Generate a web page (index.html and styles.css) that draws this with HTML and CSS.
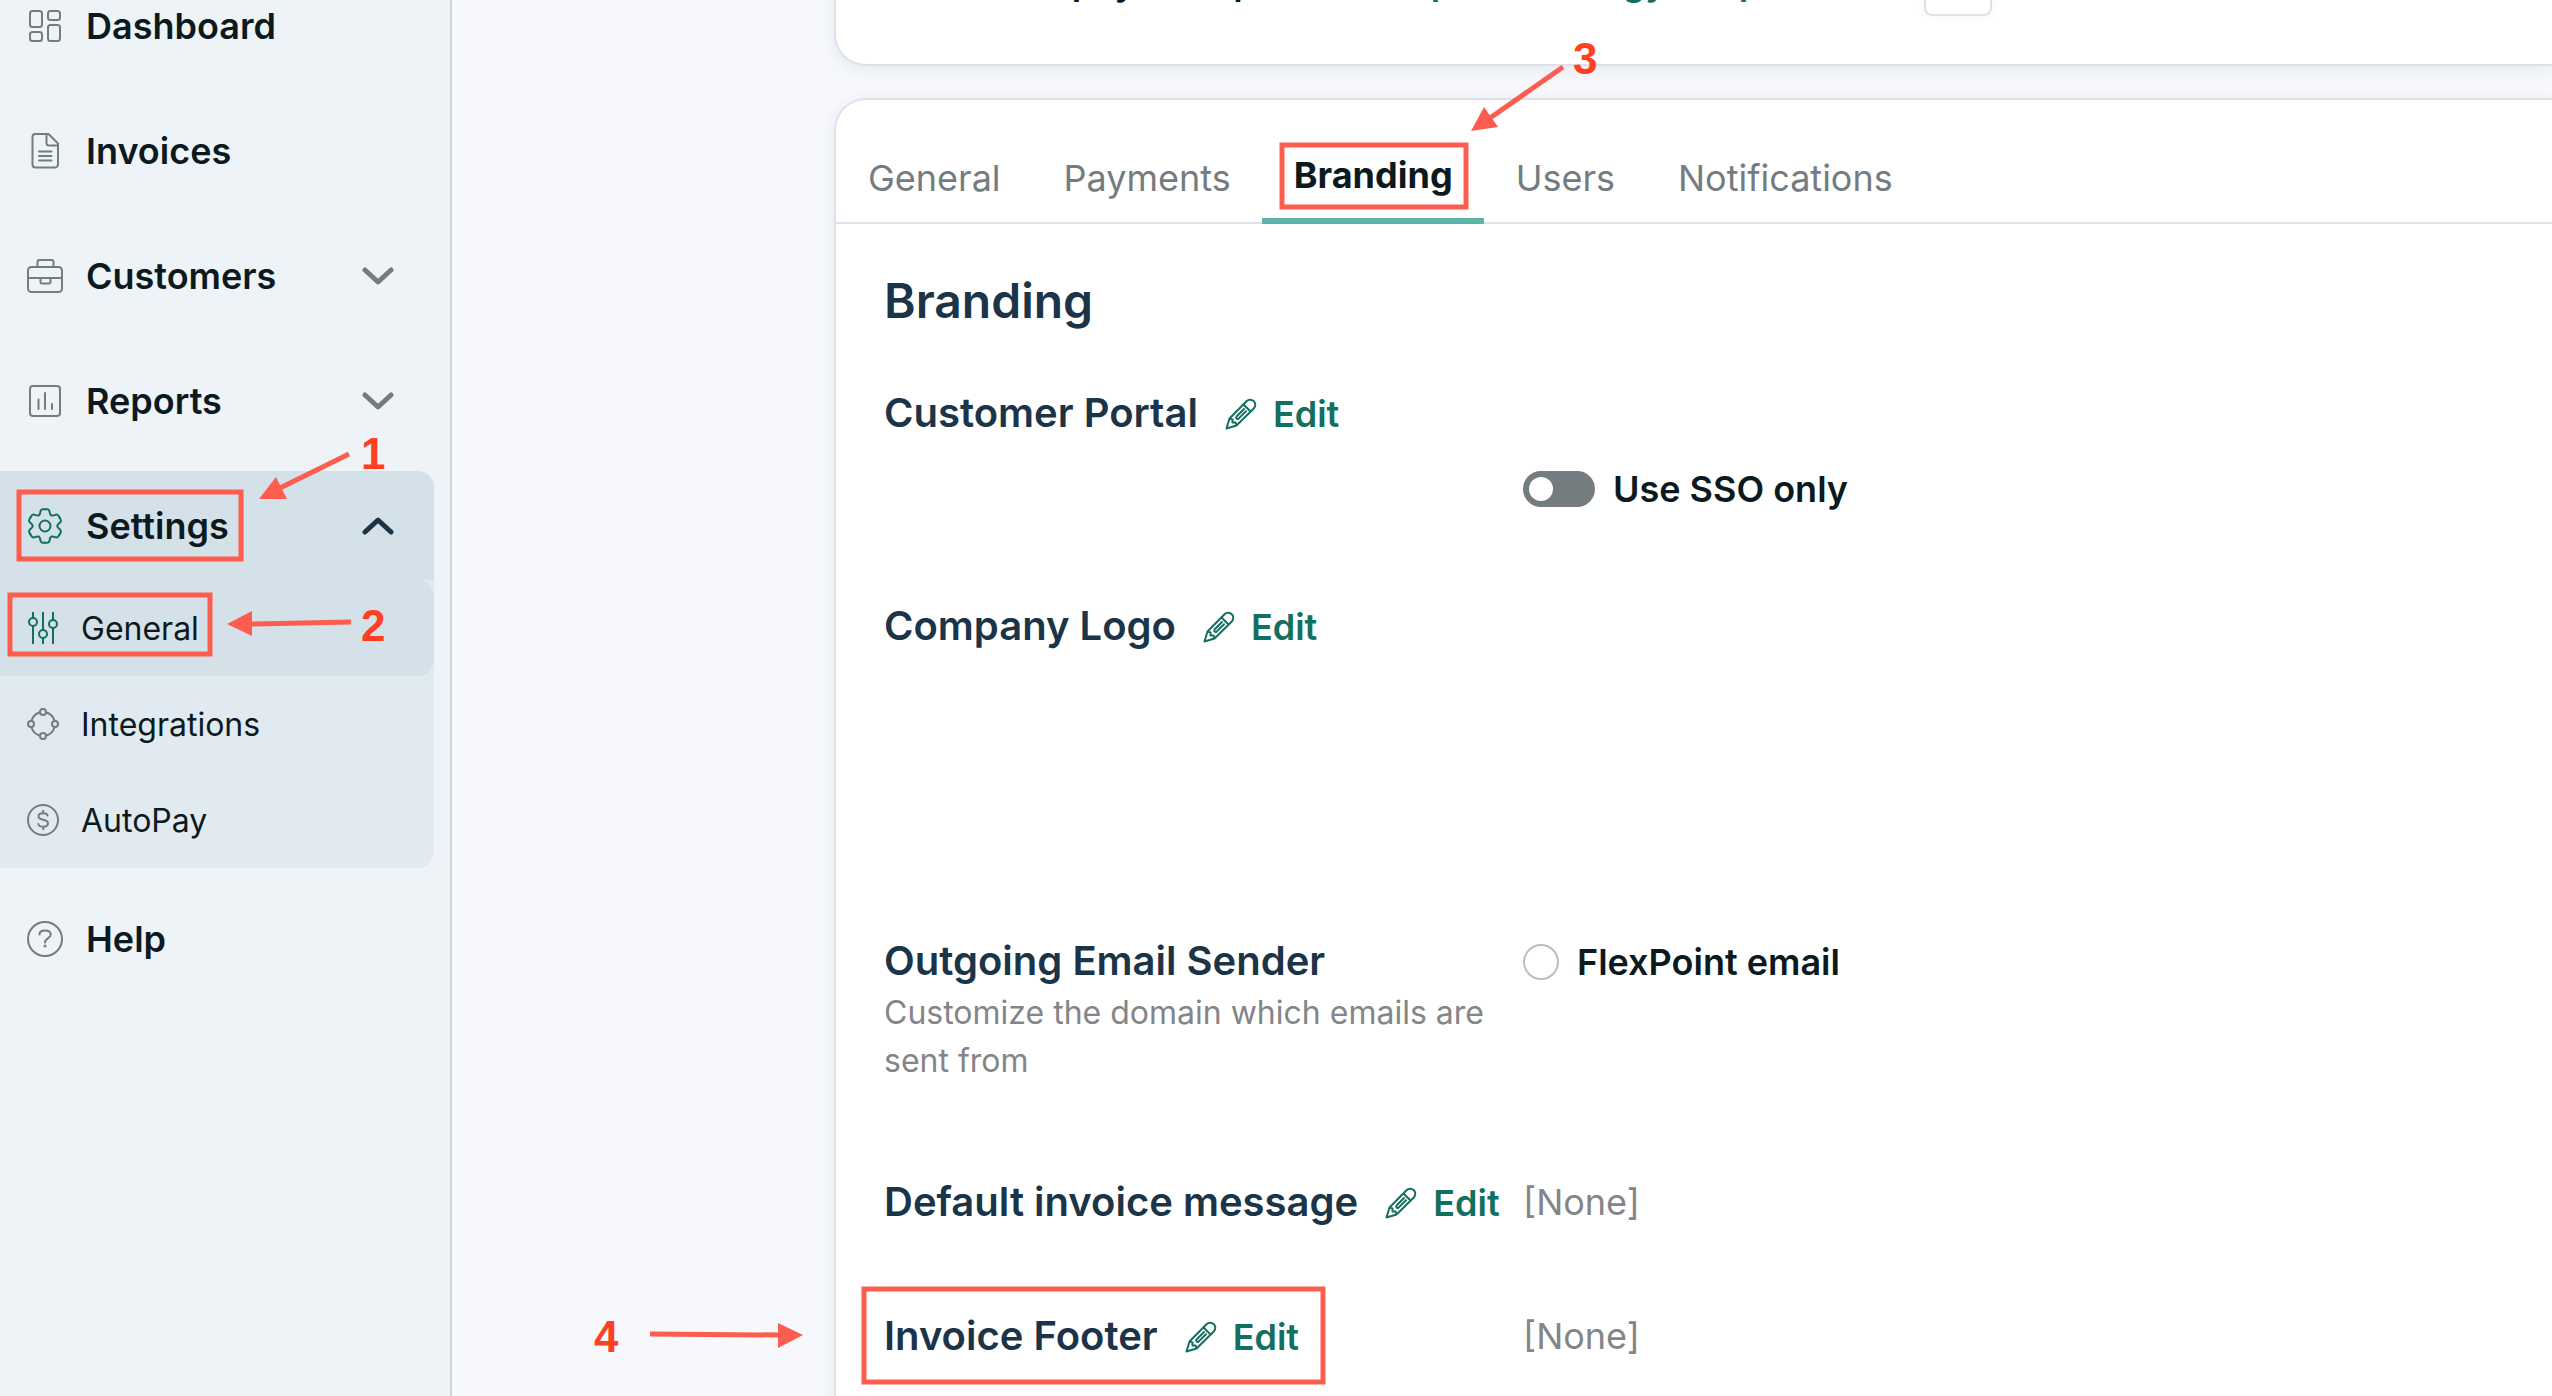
FILE: index.html
```html
<!DOCTYPE html>
<html lang="en">
<head>
<meta charset="utf-8">
<meta name="viewport" content="width=device-width, initial-scale=1">
<title>Settings - Branding</title>
<link rel="stylesheet" href="styles.css">
</head>
<body>
<svg class="sprite" aria-hidden="true">
  <symbol id="pencil" viewBox="0 0 32 32"><path d="M1.500 30.500L4.500 20.500L21.500 3.200A5 5 0 0 1 28.800 10.500L11.500 27.500ZM18.500 6.500L25.500 13.500M4.500 20.500L7.500 21.500V24.500H10.500L11.500 27.500M19 11L11.500 18.500A1.500 1.500 0 0 0 13.600 20.600L21 13.200"/></symbol>
  <symbol id="chevron" viewBox="0 0 32 20"><path d="M3 4L16 16L29 4"/></symbol>
</svg>
<div class="app">
  <aside class="sidebar">
    <nav class="nav" aria-label="Main">
      <a class="nav-item" href="#">
        <svg class="icon" viewBox="0 0 36 36"><rect x="3" y="3" width="12" height="16" rx="2.500"/><rect x="21" y="3" width="12" height="9" rx="2.500"/><rect x="3" y="24" width="12" height="9" rx="2.500"/><rect x="21" y="17" width="12" height="16" rx="2.500"/></svg>
        <span>Dashboard</span>
      </a>
      <a class="nav-item" href="#">
        <svg class="icon" viewBox="0 0 36 36"><path d="M8.500 1H21.500L31 10.500V31.500A3 3 0 0 1 28 34.500H8.500A3 3 0 0 1 5.500 31.500V4A3 3 0 0 1 8.500 1ZM19.500 1V10A2.500 2.500 0 0 0 22 12.500H31M12 18.500H24.500M12 23H24.500M12 27.500H24.500"/></svg>
        <span>Invoices</span>
      </a>
      <a class="nav-item" href="#">
        <svg class="icon" viewBox="0 0 36 36"><rect x="1" y="9" width="34" height="25" rx="3.500"/><path d="M10.500 9V4A2 2 0 0 1 12.500 2H24.500A2 2 0 0 1 26.500 4V9M1 20H35M13.500 20V24A1.500 1.500 0 0 0 15 25.500H22A1.500 1.500 0 0 0 23.500 24V20"/></svg>
        <span>Customers</span>
        <svg class="chevron"><use href="#chevron"/></svg>
      </a>
      <a class="nav-item" href="#">
        <svg class="icon" viewBox="0 0 36 36"><rect x="3" y="3" width="30" height="30" rx="3"/><path d="M11.500 16.500V26M18 10V26M25 21V26"/></svg>
        <span>Reports</span>
        <svg class="chevron"><use href="#chevron"/></svg>
      </a>
      <div class="nav-group">
        <a class="nav-item nav-item-open" href="#">
          <svg class="icon" viewBox="-18 -18 36 36">
            <g id="gear-half"><path id="tooth" d="M0-16.800H2.200Q3.800-16.800 4.400-15.200C5.200-10 6.060-9.500 10.960-11.410Q12.640-11.690 13.450-10.310L14.550-8.400"/><use href="#tooth" transform="rotate(60)"/><use href="#tooth" transform="rotate(120)"/></g>
            <use href="#gear-half" transform="rotate(180)"/><circle r="5.500"/>
          </svg>
          <span>Settings</span>
          <svg class="chevron chevron-up"><use href="#chevron"/></svg>
        </a>
        <a class="sub-item sub-item-active" href="#">
          <svg class="icon" viewBox="0 0 32 32"><path d="M6 .500V6M6 14V31.500M16 .500V18M16 26V31.500M26 .500V8M26 16V31.500"/><circle cx="6" cy="10" r="4"/><circle cx="16" cy="22" r="4"/><circle cx="26" cy="12" r="4"/></svg>
          <span>General</span>
        </a>
        <a class="sub-item" href="#">
          <svg class="icon" viewBox="0 0 32 32"><path d="M19.500 4.500A12.500 12.500 0 0 1 27.500 12.500M27.500 19.500A12.500 12.500 0 0 1 19.500 27.500M12.500 27.500A12.500 12.500 0 0 1 4.500 19.500M4.500 12.500A12.500 12.500 0 0 1 12.500 4.500"/><circle cx="16" cy="4" r="3"/><circle cx="28" cy="16" r="3"/><circle cx="16" cy="28" r="3"/><circle cx="4" cy="16" r="3"/></svg>
          <span>Integrations</span>
        </a>
        <a class="sub-item" href="#">
          <svg class="icon" viewBox="0 0 32 32"><circle cx="16" cy="16" r="15"/><path d="M20.500 11.500C20.200 9.900 18.500 9.300 16.300 9.300C13.500 9.300 11.500 10.300 11.500 12.500C11.500 17 21 14.500 21 19.300C21 21.600 18.800 22.700 16.200 22.700C13.500 22.700 11.500 21.800 11.300 20M16.200 6.800V9.300M16.200 22.700V25.200"/></svg>
          <span>AutoPay</span>
        </a>
      </div>
      <a class="nav-item" href="#">
        <svg class="icon" viewBox="0 0 36 36"><circle cx="18" cy="18" r="17"/><path d="M12.500 13.500C12.500 10.800 15 9.500 18 9.500C21.200 9.500 23.700 11 23.700 13.700C23.700 17.300 18 17 18 21.500"/><circle cx="18" cy="25" r=".600"/></svg>
        <span>Help</span>
      </a>
    </nav>
  </aside>

  <main class="main">
    <section class="card card-top">
      <p class="portal-label">Customer payment portal</p>
      <a class="portal-link" href="#">Sharp Technology Corp</a>
      <button class="copy-button" type="button" aria-label="Copy"></button>
    </section>

    <section class="card">
      <nav class="tabs" aria-label="Settings">
        <a class="tab" href="#">General</a>
        <a class="tab" href="#">Payments</a>
        <a class="tab tab-active" href="#" aria-current="page">Branding</a>
        <a class="tab" href="#">Users</a>
        <a class="tab" href="#">Notifications</a>
      </nav>
      <div class="panel">
        <h1 class="title">Branding</h1>
        <div class="rows">
          <div class="row row-portal">
            <div class="row-head"><h2>Customer Portal</h2><button class="edit" type="button"><svg><use href="#pencil"/></svg>Edit</button></div>
            <label class="choice"><input class="toggle" type="checkbox" role="switch">Use SSO only</label>
          </div>
          <div class="row row-logo">
            <div class="row-head"><h2>Company Logo</h2><button class="edit" type="button"><svg><use href="#pencil"/></svg>Edit</button></div>
          </div>
          <div class="row row-sender">
            <div>
              <h2>Outgoing Email Sender</h2>
              <p class="hint">Customize the domain which emails are sent from</p>
            </div>
            <label class="choice"><input class="radio" type="radio" name="sender">FlexPoint email</label>
          </div>
          <div class="row">
            <div class="row-head"><h2>Default invoice message</h2><button class="edit" type="button"><svg><use href="#pencil"/></svg>Edit</button></div>
            <p class="value">[None]</p>
          </div>
          <div class="row">
            <div class="row-head"><h2>Invoice Footer</h2><button class="edit" type="button"><svg><use href="#pencil"/></svg>Edit</button></div>
            <p class="value">[None]</p>
          </div>
        </div>
      </div>
    </section>
  </main>

  <svg class="notes">
    <g class="note-box">
      <rect x="19" y="492" width="222" height="67"/>
      <rect x="10" y="595" width="200" height="59"/>
      <rect x="1282" y="145" width="184" height="62"/>
      <rect x="864" y="1289" width="459" height="93"/>
    </g>
    <g class="note-line">
      <path d="M349 454L280 488M351 622L250 624M1563 67L1490 118M650 1334L780 1335"/>
    </g>
    <g class="note-head">
      <path d="M259 499L276 477L287 499ZM227 624L252 611V636ZM1471 131L1484 107L1498 127ZM803 1335L778 1323V1348Z"/>
    </g>
    <g class="note-number">
      <text x="361" y="469">1</text>
      <text x="361" y="641">2</text>
      <text x="1573" y="74">3</text>
      <text x="594" y="1352">4</text>
    </g>
  </svg>
</div>
</body>
</html>
```
FILE: styles.css
```css
* { box-sizing: border-box; }

body {
  margin: 0;
  font-family: Inter, "Liberation Sans", sans-serif;
  font-size: 36px;
  color: #0c1a20;
  background: #f6f8fc;
}

h1, h2, p { margin: 0; }
a { color: inherit; text-decoration: none; }
svg { fill: none; stroke: currentColor; stroke-linecap: round; stroke-linejoin: round; }
.sprite { position: absolute; width: 0; height: 0; }

.app {
  position: relative;
  display: flex;
  height: 100vh;
  overflow: hidden;
}

/* Sidebar */
.sidebar {
  flex: 0 0 452px;
  padding-right: 16px;
  background: #edf3f7;
  border-right: 2px solid #cfd3d8;
}
.nav {
  display: flex;
  flex-direction: column;
  gap: 16px;
  margin-top: -29px;
}
.nav-item {
  display: flex;
  align-items: center;
  gap: 23px;
  height: 109px;
  padding: 0 40px 0 27px;
  font-weight: 600;
}
.icon {
  flex: none;
  width: 36px;
  height: 36px;
  color: #757c80;
  stroke-width: 2;
}
.chevron {
  width: 32px;
  height: 20px;
  margin-left: auto;
  color: #757c80;
  stroke-width: 5;
}
.chevron-up { color: #1b3447; transform: rotate(180deg); }
.nav-group { background: #e2eaf1; border-radius: 0 16px 16px 0; }
.nav-item-open { background: #d5e1e9; border-radius: 0 16px 0 0; }
.nav-item-open .icon, .sub-item-active .icon { color: #136f5f; }
.sub-item {
  display: flex;
  align-items: center;
  gap: 22px;
  height: 96px;
  padding-left: 27px;
  font-size: 32px;
}
.sub-item .icon { width: 32px; height: 32px; }
.sub-item-active { background: #d5e1e9; border-radius: 0 16px 16px 0; }

/* Cards */
.main { flex: 1; min-width: 0; padding-left: 382px; }
.card {
  background: #fff;
  border: 2px solid #e0e1e8;
  border-right: 0;
  border-radius: 32px 0 0 32px;
  box-shadow: 0 4px 16px rgba(27, 52, 71, 0.08);
}
.card-top {
  display: flex;
  align-items: center;
  height: 120px;
  margin: -54px 0 32px;
  padding: 0 48px 48px 56px;
  font-weight: 600;
}
.portal-label { flex: 0 0 458px; }
.portal-link { flex: 0 0 574px; color: #136f5f; }
.copy-button {
  width: 68px;
  height: 68px;
  background: #fff;
  border: 2px solid #e0e1e8;
  border-radius: 8px;
  box-shadow: 0 0 8px rgba(27, 52, 71, 0.06);
}

/* Tabs */
.tabs { display: flex; height: 124px; box-shadow: inset 0 -2px #e0e1e8; }
.tab {
  display: flex;
  align-items: center;
  padding: 32px 31px 0 32px;
  color: #757c80;
}
.tab-active {
  color: #0c1a20;
  font-weight: 700;
  border-bottom: 6px solid #5eb4aa;
}

/* Branding panel */
.panel { padding: 45px 48px 80px; }
.title {
  margin-bottom: 51px;
  font-size: 48px;
  line-height: 64px;
  font-weight: 600;
  color: #1b3447;
}
.rows { display: flex; flex-direction: column; gap: 76px; }
.row {
  display: grid;
  grid-template-columns: 607px 1fr;
  column-gap: 32px;
  align-items: start;
}
.row-head { display: flex; align-items: center; gap: 27px; margin-right: -32px; }
h2 { font-size: 40px; line-height: 56px; font-weight: 600; color: #1b3447; }
.edit {
  display: flex;
  align-items: center;
  gap: 16px;
  padding: 2px 0 0;
  border: 0;
  background: none;
  font: inherit;
  font-weight: 600;
  line-height: 56px;
  color: #136f5f;
}
.edit svg { width: 32px; height: 32px; stroke-width: 2; }
.hint { font-size: 32px; line-height: 48px; color: #838587; }
.value { line-height: 58px; color: #838587; }
.choice {
  display: flex;
  align-items: center;
  gap: 18px;
  line-height: 58px;
  font-weight: 600;
}
.row-portal { min-height: 137px; }
.row-portal .choice { padding-top: 76px; }
.row-logo { min-height: 260px; }
.row-sender { min-height: 164px; }

.toggle {
  appearance: none;
  display: flex;
  width: 72px;
  height: 36px;
  margin: 0;
  padding: 6px;
  border-radius: 18px;
  background: #757c80;
}
.toggle::before {
  content: "";
  width: 24px;
  height: 24px;
  border-radius: 50%;
  background: #fff;
}
.toggle:checked { justify-content: flex-end; background: #136f5f; }
.radio {
  appearance: none;
  width: 36px;
  height: 36px;
  margin: 0;
  border: 2px solid #b9bec0;
  border-radius: 50%;
}
.radio:checked { border: 10px solid #136f5f; }

/* Step annotations laid over the page */
.notes {
  position: absolute;
  inset: 0;
  width: 100%;
  height: 100%;
  pointer-events: none;
}
.note-box, .note-line { stroke: #fc5d4e; stroke-width: 5; stroke-linecap: butt; stroke-linejoin: miter; }
.note-head { fill: #fc5d4e; stroke: none; }
.note-number {
  fill: #ff3f20;
  stroke: none;
  font-family: "Liberation Sans", sans-serif;
  font-size: 44px;
  font-weight: 700;
}
```
